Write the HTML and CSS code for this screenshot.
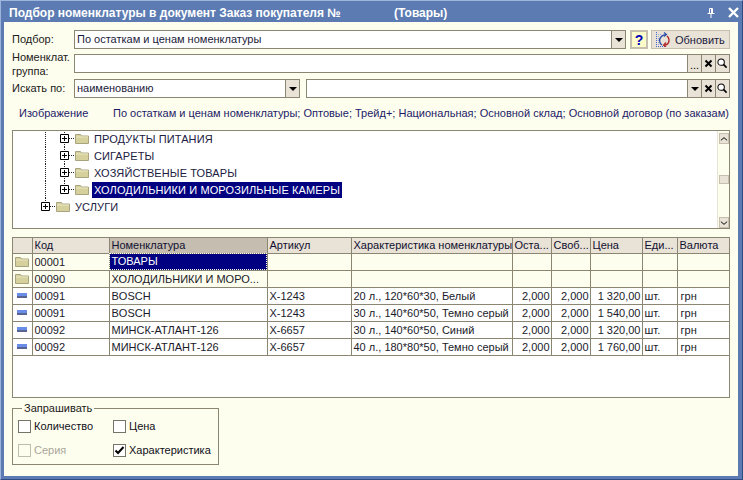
FILE: index.html
```html
<!DOCTYPE html>
<html lang="ru">

<head>
    <meta charset="UTF-8">
    <title>Подбор номенклатуры</title>
    <link rel="stylesheet" href="styles.css">
</head>

<body>
    <svg class="defs" width="0" height="0">
        <symbol id="folder" viewBox="0 0 14 11">
            <path d="M0.5 1.5h5l1 1.5h7v7.500h-13z" fill="#d6d09c" stroke="#a8a480"/>
            <path d="M1 4h12" stroke="#ece8c4"/>
        </symbol>
        <symbol id="cross" viewBox="0 0 9 9">
            <path d="M1.500 1.500l6 6M7.500 1.500l-6 6" stroke="#000" stroke-width="2" fill="none"/>
        </symbol>
        <symbol id="lens" viewBox="0 0 12 12">
            <circle cx="4.500" cy="4.500" r="3.500" fill="#fff" stroke="#000" stroke-width="1.100"/>
            <path d="M7 7l3.500 3.500" stroke="#000" stroke-width="1.800"/>
        </symbol>
        <symbol id="plus" viewBox="0 0 9 9">
            <path d="M0.500 0.500h8v8h-8z" fill="#fff" stroke="#000"/>
            <path d="M2 4.500h5M4.500 2v5" stroke="#000"/>
        </symbol>
        <symbol id="item" viewBox="0 0 10 5">
            <path d="M0 0h10v3h-10z" fill="#6a8ee8"/>
            <path d="M0 3h10v2h-10z" fill="#5a6490"/>
        </symbol>
    </svg>

    <div class="window">
        <div class="titlebar">
            <span class="title-main">Подбор номенклатуры в документ Заказ покупателя №</span>
            <span class="title-sub">(Товары)</span>
            <svg class="pin" width="8" height="10" viewBox="0 0 8 10">
                <path d="M2.500 0.500h3v5h-3zM0.500 5.500h7M4 6v4M4.500 1v4" stroke="#fff" fill="none"/>
            </svg>
            <svg class="close" width="11" height="11" viewBox="0 0 11 11">
                <path d="M1 1l9 9M10 1l-9 9" stroke="#fff" stroke-width="2.400" fill="none"/>
            </svg>
        </div>

        <div class="content">
            <div class="form-row">
                <label class="form-label">Подбор:</label>
                <div class="field field-grow">
                    <span class="field-text">По остаткам и ценам номенклатуры</span>
                    <span class="field-btn"><i class="arrow"></i></span>
                </div>
                <button class="help-btn">?</button>
                <button class="refresh-btn">
                    <svg width="15" height="15" viewBox="0 0 15 15">
                        <path d="M0.500 0v15M0 14.500h9" stroke="#4466cc" stroke-dasharray="1 1"/>
                        <path d="M2.500 2v11M2 2.500h4" stroke="#99aadd" stroke-dasharray="1 1"/>
                        <path d="M6 13c-3-2-3-6-1-8 1.500-2 4-2.500 5-2" stroke="#3050a8" stroke-width="1.400" fill="none"/>
                        <path d="M8 0.500l2.500 2-2.500 2" stroke="#3050a8" stroke-width="1.200" fill="none"/>
                        <path d="M11 4c2.500 2 2.500 5.500 1 7.500-1 1.300-2.500 1.700-4 1.700" stroke="#b02828" stroke-width="1.400" fill="none"/>
                        <path d="M10 10.500l-2.500 2.700 2.500 1.800" stroke="#b02828" stroke-width="1.200" fill="none"/>
                    </svg>
                    Обновить
                </button>
            </div>

            <div class="form-row form-row-2">
                <label class="form-label form-label-two">Номенклат. группа:</label>
                <div class="field field-grow">
                    <span class="field-text"></span>
                    <span class="field-btn dots">...</span>
                    <span class="field-btn"><svg width="9" height="9"><use href="#cross"/></svg></span>
                    <span class="field-btn"><svg width="11" height="11"><use href="#lens"/></svg></span>
                </div>
            </div>

            <div class="form-row form-row-3">
                <label class="form-label">Искать по:</label>
                <div class="field field-search">
                    <span class="field-text">наименованию</span>
                    <span class="field-btn"><i class="arrow"></i></span>
                </div>
                <div class="field field-grow">
                    <span class="field-text"></span>
                    <span class="field-btn"><i class="arrow"></i></span>
                    <span class="field-btn"><svg width="9" height="9"><use href="#cross"/></svg></span>
                    <span class="field-btn"><svg width="11" height="11"><use href="#lens"/></svg></span>
                </div>
            </div>

            <div class="info-row">
                <span class="info-image">Изображение</span>
                <span>По остаткам и ценам номенклатуры; Оптовые; Трейд+; Национальная; Основной склад; Основной договор (по заказам)</span>
            </div>

            <div class="tree">
                <div class="tree-list">
                    <div class="tree-row">
                        <svg class="guide" width="63" height="17">
                            <path class="dotted" d="M33.500 0v17M52.500 0v17M57 8.500h6"/>
                            <use href="#plus" x="48" y="4" width="9" height="9"/>
                        </svg>
                        <svg class="folder" width="14" height="11"><use href="#folder"/></svg>
                        <span class="tree-text">ПРОДУКТЫ ПИТАНИЯ</span>
                    </div>
                    <div class="tree-row">
                        <svg class="guide" width="63" height="17">
                            <path class="dotted" d="M33.500 0v17M52.500 0v17M57 8.500h6"/>
                            <use href="#plus" x="48" y="4" width="9" height="9"/>
                        </svg>
                        <svg class="folder" width="14" height="11"><use href="#folder"/></svg>
                        <span class="tree-text">СИГАРЕТЫ</span>
                    </div>
                    <div class="tree-row">
                        <svg class="guide" width="63" height="17">
                            <path class="dotted" d="M33.500 0v17M52.500 0v17M57 8.500h6"/>
                            <use href="#plus" x="48" y="4" width="9" height="9"/>
                        </svg>
                        <svg class="folder" width="14" height="11"><use href="#folder"/></svg>
                        <span class="tree-text">ХОЗЯЙСТВЕНЫЕ ТОВАРЫ</span>
                    </div>
                    <div class="tree-row">
                        <svg class="guide" width="63" height="17">
                            <path class="dotted" d="M33.500 0v17M52.500 0v8M57 8.500h6"/>
                            <use href="#plus" x="48" y="4" width="9" height="9"/>
                        </svg>
                        <svg class="folder" width="14" height="11"><use href="#folder"/></svg>
                        <span class="tree-text tree-selected">ХОЛОДИЛЬНИКИ И МОРОЗИЛЬНЫЕ КАМЕРЫ</span>
                    </div>
                    <div class="tree-row">
                        <svg class="guide" width="44" height="17">
                            <path class="dotted" d="M33.500 0v4M38 8.500h6"/>
                            <use href="#plus" x="29" y="4" width="9" height="9"/>
                        </svg>
                        <svg class="folder" width="14" height="11"><use href="#folder"/></svg>
                        <span class="tree-text">УСЛУГИ</span>
                    </div>
                </div>
                <div class="scrollbar">
                    <span class="scroll-btn"><svg width="9" height="6" viewBox="0 0 9 6"><path d="M1 4.500l3.500-3 3.500 3" stroke="#000" stroke-width="1.100" fill="none"/></svg></span>
                    <span class="scroll-thumb"></span>
                    <span class="scroll-btn"><svg width="9" height="6" viewBox="0 0 9 6"><path d="M1 1.500l3.500 3 3.500-3" stroke="#000" stroke-width="1.100" fill="none"/></svg></span>
                </div>
            </div>

            <div class="table-box">
                <table class="grid">
                    <colgroup>
                        <col class="c-icon"><col class="c-code"><col class="c-name"><col class="c-art"><col class="c-char">
                        <col class="c-ost"><col class="c-free"><col class="c-price"><col class="c-unit"><col class="c-cur">
                    </colgroup>
                    <thead>
                        <tr>
                            <th></th><th>Код</th><th class="sorted">Номенклатура</th><th>Артикул</th>
                            <th>Характеристика номенклатуры</th><th>Оста...</th><th>Своб...</th><th>Цена</th><th>Еди...</th><th>Валюта</th>
                        </tr>
                    </thead>
                    <tbody>
                        <tr class="group">
                            <td class="ico"><svg width="14" height="11"><use href="#folder"/></svg></td>
                            <td>00001</td><td class="current">ТОВАРЫ</td><td></td><td></td><td></td><td></td><td></td><td></td><td></td>
                        </tr>
                        <tr class="group">
                            <td class="ico"><svg width="14" height="11"><use href="#folder"/></svg></td>
                            <td>00090</td><td>ХОЛОДИЛЬНИКИ И МОРО...</td><td></td><td></td><td></td><td></td><td></td><td></td><td></td>
                        </tr>
                        <tr>
                            <td class="ico"><svg width="10" height="5"><use href="#item"/></svg></td>
                            <td>00091</td><td>BOSCH</td><td>X-1243</td><td>20 л., 120*60*30, Белый</td>
                            <td class="num">2,000</td><td class="num">2,000</td><td class="num">1 320,00</td><td>шт.</td><td class="cur">грн</td>
                        </tr>
                        <tr>
                            <td class="ico"><svg width="10" height="5"><use href="#item"/></svg></td>
                            <td>00091</td><td>BOSCH</td><td>X-1243</td><td>30 л., 140*60*50, Темно серый</td>
                            <td class="num">2,000</td><td class="num">2,000</td><td class="num">1 540,00</td><td>шт.</td><td class="cur">грн</td>
                        </tr>
                        <tr>
                            <td class="ico"><svg width="10" height="5"><use href="#item"/></svg></td>
                            <td>00092</td><td>МИНСК-АТЛАНТ-126</td><td>X-6657</td><td>30 л., 140*60*50, Синий</td>
                            <td class="num">2,000</td><td class="num">2,000</td><td class="num">1 320,00</td><td>шт.</td><td class="cur">грн</td>
                        </tr>
                        <tr>
                            <td class="ico"><svg width="10" height="5"><use href="#item"/></svg></td>
                            <td>00092</td><td>МИНСК-АТЛАНТ-126</td><td>X-6657</td><td>40 л., 180*80*50, Темно серый</td>
                            <td class="num">2,000</td><td class="num">2,000</td><td class="num">1 760,00</td><td>шт.</td><td class="cur">грн</td>
                        </tr>
                    </tbody>
                </table>
            </div>

            <fieldset class="ask">
                <legend>Запрашивать</legend>
                <div class="ask-grid">
                    <label class="check"><i class="box"></i>Количество</label>
                    <label class="check"><i class="box"></i>Цена</label>
                    <label class="check check-off"><i class="box"></i>Серия</label>
                    <label class="check"><i class="box">
                        <svg width="11" height="11" viewBox="0 0 11 11"><path d="M1.500 5.500l2.500 2.500 5.500-6" stroke="#000" stroke-width="2" fill="none"/></svg>
                    </i>Характеристика</label>
                </div>
            </fieldset>
        </div>
    </div>
</body>

</html>
```

FILE: styles.css
```css
* {
    box-sizing: border-box;
}

body {
    margin: 0;
    font-family: "Liberation Sans", Arial, sans-serif;
    font-size: 11px;
    color: #101030;
}

.defs {
    display: block;
    height: 0;
}

.window {
    width: 743px;
    height: 480px;
    display: flex;
    flex-direction: column;
    background-color: #5c7bb2;
    border-top: 1px solid #9db4dc;
    border-left: 1px solid #9db4dc;
    border-right: 1px solid #2f4c84;
    border-bottom: 1px solid #2f4c84;
    padding: 0 4px 3px 3px;
}

.titlebar {
    height: 21px;
    display: flex;
    align-items: center;
    color: #fff;
    font-weight: bold;
    font-size: 12px;
    padding: 2px 0 0 5px;
    flex-shrink: 0;
}

.title-main {
    width: 385px;
}

.title-sub {
    flex: 1;
}

.pin {
    margin-right: 13px;
}

.close {
    margin-right: -1px;
}

.content {
    flex: 1;
    background-color: #fefeee;
    padding: 8px 8px 0 8px;
}

.form-row {
    display: flex;
    height: 19px;
    align-items: stretch;
}

.form-row-2 {
    margin-top: 5px;
}

.form-row-3 {
    margin-top: 6px;
}

.form-label {
    width: 62px;
    flex-shrink: 0;
    line-height: 19px;
    color: #202020;
    white-space: nowrap;
}

.form-label-two {
    line-height: 14px;
    white-space: normal;
    margin-top: -4px;
}

.field {
    display: flex;
    background-color: #fff;
    border: 1px solid #8a8672;
}

.field-grow {
    flex: 1;
}

.field-search {
    width: 226px;
    margin-right: 6px;
    flex-shrink: 0;
}

.field-text {
    flex: 1;
    padding-left: 2px;
    line-height: 17px;
    color: #1a1a3a;
}

.field-btn {
    width: 14px;
    background-color: #e9e2d6;
    border-left: 1px solid #8a8672;
    display: flex;
    align-items: center;
    justify-content: center;
}

.dots {
    color: #000;
    align-items: flex-end;
    line-height: 14px;
}

.arrow {
    border-left: 4px solid transparent;
    border-right: 4px solid transparent;
    border-top: 4px solid #000;
}

.help-btn {
    width: 18px;
    margin-left: 4px;
    padding: 0;
    background-color: #fdfcc8;
    border: 2px solid #c6bfb0;
    color: #0000b8;
    font-family: inherit;
    font-size: 14px;
    font-weight: bold;
}

.refresh-btn {
    width: 79px;
    margin-left: 3px;
    padding: 0 0 0 4px;
    display: flex;
    align-items: center;
    gap: 4px;
    background-color: #e9e2d6;
    border: 1px solid #c6bfb0;
    font-family: inherit;
    font-size: 11px;
    color: #202040;
}

.info-row {
    display: flex;
    height: 32px;
    align-items: center;
    padding: 0 0 2px 7px;
    color: #1c1a68;
    white-space: nowrap;
}

.info-image {
    width: 94px;
}

.tree {
    height: 99px;
    display: flex;
    background-color: #fff;
    border: 1px solid #8a8672;
    overflow: hidden;
}

.tree-list {
    flex: 1;
    overflow: hidden;
}

.tree-row {
    height: 17px;
    display: flex;
    align-items: center;
    white-space: nowrap;
}

.tree-row:first-child {
    margin-top: -1px;
}

.guide {
    flex-shrink: 0;
    margin-left: -1px;
}

.dotted {
    stroke: #222;
    stroke-dasharray: 1 1;
    fill: none;
}

.folder {
    margin: 0 3px 0 0;
    flex-shrink: 0;
}

.tree-text {
    padding: 0 2px;
    line-height: 16px;
    letter-spacing: .1px;
    color: #202040;
}

.tree-selected {
    background-color: #000080;
    color: #fff;
}

.scrollbar {
    width: 12px;
    background-color: #fefeee;
    border-left: 1px solid #e9e2d6;
    padding: 2px 0 0 0;
    display: flex;
    flex-direction: column;
    align-items: center;
}

.scroll-btn {
    width: 10px;
    height: 11px;
    background-color: #e9e2d6;
    border: 1px solid #c6bfb0;
    display: flex;
    align-items: center;
    justify-content: center;
    flex-shrink: 0;
}

.scroll-thumb {
    width: 10px;
    height: 10px;
    margin: 31px 0 33px 0;
    background-color: #e9e2d6;
    border: 1px solid #c6bfb0;
}

.table-box {
    height: 161px;
    margin-top: 8px;
    background-color: #fff;
    border: 1px solid #8a8672;
}

.grid {
    width: 716px;
    table-layout: fixed;
    border-collapse: collapse;
}

.c-icon { width: 19px; }
.c-code { width: 77px; }
.c-name { width: 158px; }
.c-art { width: 84px; }
.c-char { width: 161px; }
.c-ost { width: 39px; }
.c-free { width: 39px; }
.c-price { width: 52px; }
.c-unit { width: 35px; }
.c-cur { width: 52px; }

.grid th,
.grid td {
    padding: 0 1px 0 2px;
    overflow: hidden;
    white-space: nowrap;
    font-weight: normal;
    text-align: left;
    border-left: 1px solid #8a8672;
    border-bottom: 1px solid #8a8672;
}

.grid th:first-child,
.grid td:first-child {
    border-left: none;
}

.grid th {
    height: 15px;
    line-height: 14px;
    background-color: #e9e2d6;
}

.grid th.sorted {
    background-color: #c5bdb0;
}

.grid td {
    height: 17px;
    line-height: 15px;
    padding-top: 1px;
    color: #1a1a2a;
}

.group td {
    background-color: #fefeee;
}

.grid .current {
    background-color: #000080;
    color: #fff;
    outline: 1px dotted #fefeee;
    outline-offset: -1px;
    padding-top: 0;
}

.grid .ico {
    padding: 0;
}

.ico svg {
    display: block;
    margin: 0 auto;
}

.grid .num {
    text-align: right;
}

.grid .cur {
    padding-left: 3px;
}

.ask {
    width: 207px;
    height: 63px;
    margin: 4px 0 0 0;
    padding: 0 0 0 5px;
    border: 1px solid #8a8672;
}

.ask legend {
    margin-left: 4px;
    padding: 0 2px;
    line-height: 12px;
    color: #202020;
}

.ask-grid {
    display: grid;
    grid-template-columns: 95px 1fr;
    grid-auto-rows: 24px;
}

.check {
    display: flex;
    align-items: center;
    gap: 3px;
    white-space: nowrap;
    color: #101020;
}

.box {
    width: 13px;
    height: 13px;
    background-color: #fff;
    border: 1px solid #77736a;
    display: flex;
    align-items: center;
    justify-content: center;
}

.check-off {
    color: #a8a69a;
}

.check-off .box {
    border-color: #c0bdb0;
    background-color: #fefeee;
}
```
